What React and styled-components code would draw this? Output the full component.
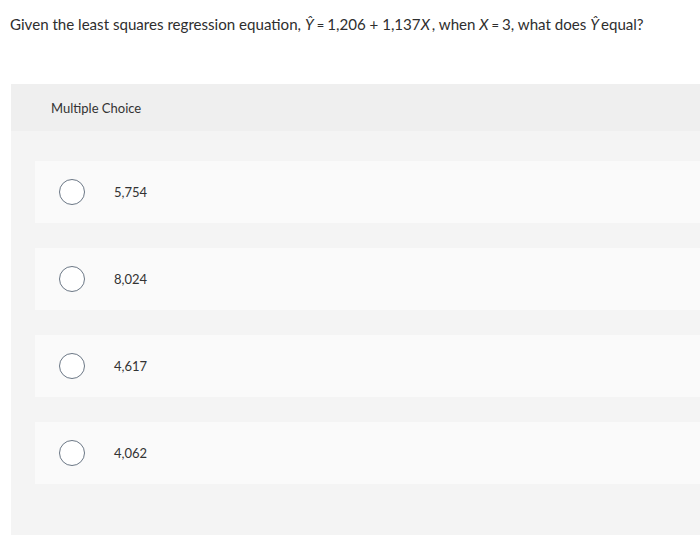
import React from "react";
import styled, { createGlobalStyle } from "styled-components";

const options = ["5,754", "8,024", "4,617", "4,062"];

export default function App() {
  return (
    <Page>
      <GlobalStyle />
      <Question>
        Given the least squares regression equation, <Var>Ŷ</Var>
        <Op>=</Op>1,206 + 1,137<Var>X</Var>, when <Var>X</Var>
        <Op>=</Op>3, what does <Var>Ŷ</Var>equal?
      </Question>

      <Panel>
        <PanelHeader>Multiple Choice</PanelHeader>
        <PanelBody>
          {options.map(opt => (
            <Option key={opt}>
              <Radio />
              <OptionText>{opt}</OptionText>
            </Option>
          ))}
        </PanelBody>
      </Panel>
    </Page>
  );
}

// CSS
const GlobalStyle = createGlobalStyle`
  html, body {
    margin: 0;
    padding: 0;
    background: #ffffff;
    overflow: hidden;
  }
  body {
    font-family: Lato, "Open Sans", "Liberation Sans", sans-serif;
    color: #333333;
  }
`;
const Page = styled.div`
  width: 700px;
  height: 537px;
  display: flex;
  flex-direction: column;
`;
const Question = styled.div`
  font-size: 15.1px;
  line-height: 20px;
  padding: 14px 0 0 10px;
  color: #2e2e2e;
  white-space: nowrap;
`;
const Var = styled.i`
  font-style: italic;
  margin-right: 2px;
`;
const Op = styled.span`
  margin: 0 3px 0 1px;
  font-size: 13px;
`;
const Panel = styled.div`
  margin: 49px 0 2px 11px;
  flex: 1;
  display: flex;
  flex-direction: column;
  background: #f4f4f4;
`;
const PanelHeader = styled.div`
  height: 47px;
  display: flex;
  align-items: center;
  padding-left: 40px;
  background: #efefef;
  font-size: 13px;
  color: #333333;
`;
const PanelBody = styled.div`
  display: flex;
  flex-direction: column;
  gap: 25px;
  padding: 30px 0 0 24px;
`;
const Option = styled.div`
  height: 62px;
  display: flex;
  align-items: center;
  background: #fafafa;
  padding-left: 24px;
`;
const Radio = styled.span`
  width: 24px;
  height: 24px;
  border-radius: 50%;
  border: 1.5px solid #6b7785;
  background: #ffffff;
  flex-shrink: 0;
`;
const OptionText = styled.span`
  margin-left: 29px;
  font-size: 13px;
  color: #333333;
`;
